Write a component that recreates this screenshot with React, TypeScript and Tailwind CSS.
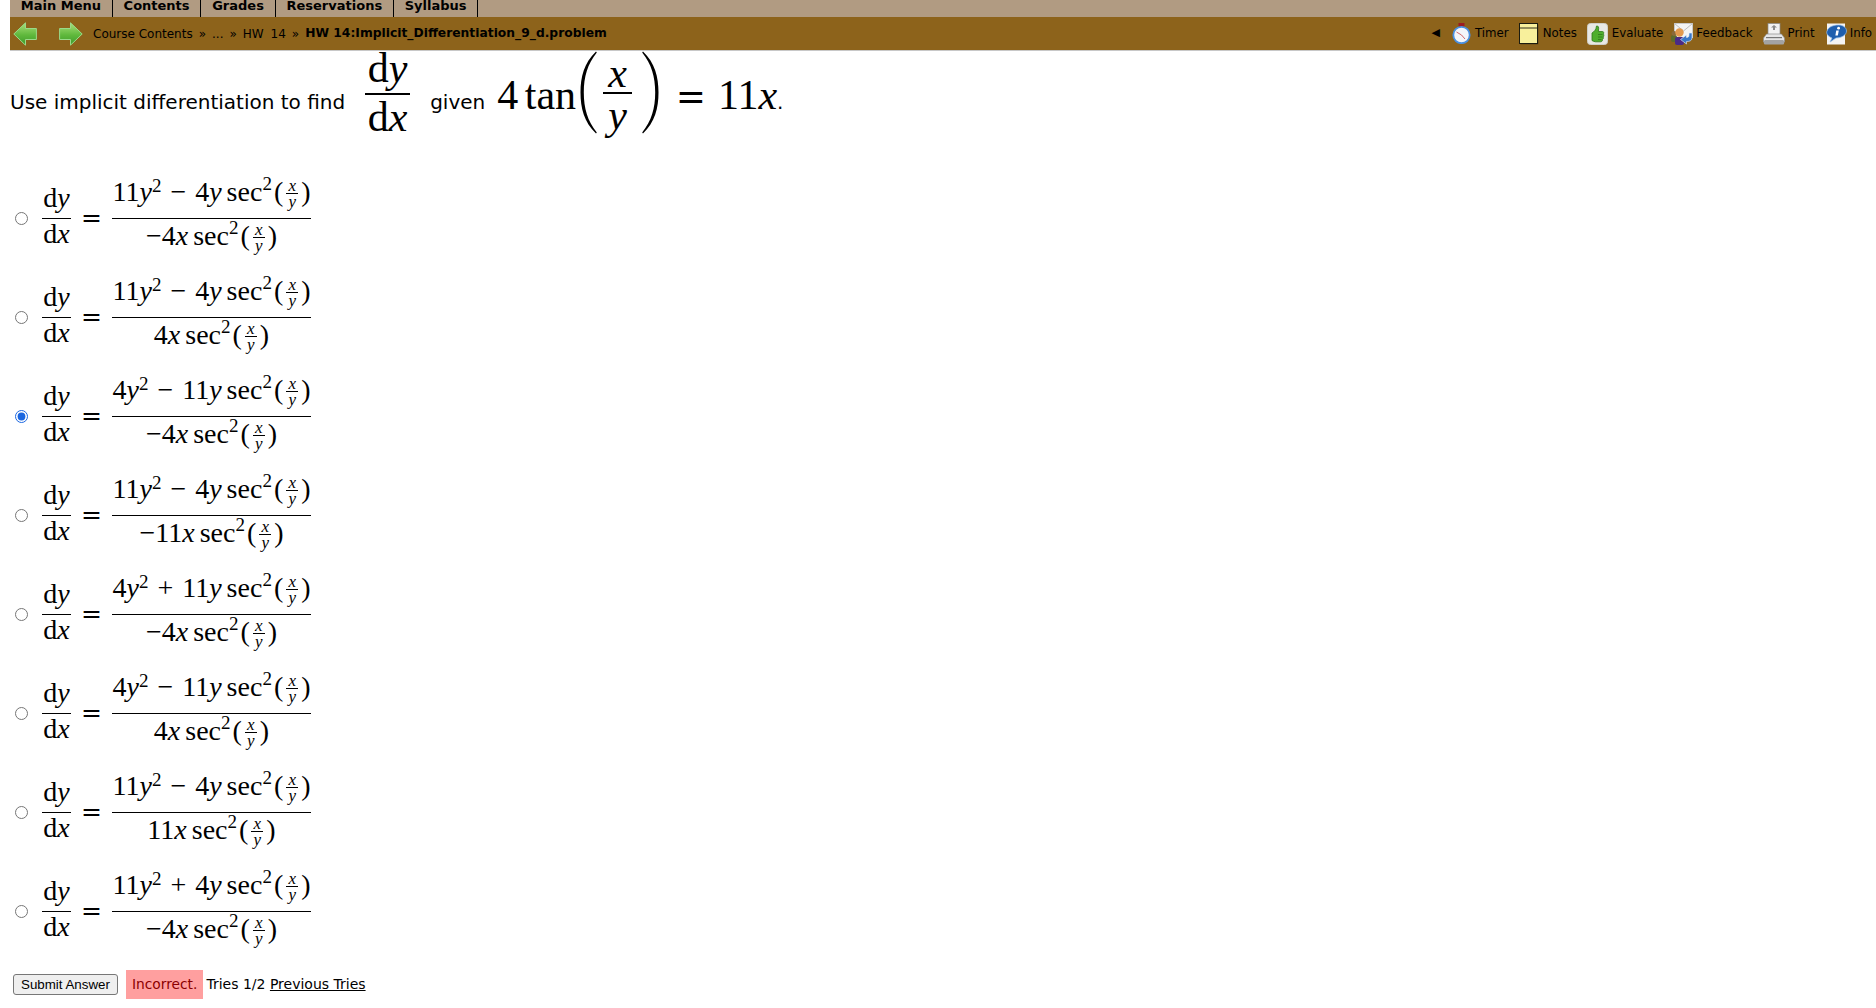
import React from "react";

const serif = "font-['Liberation_Serif','Times_New_Roman',serif]";

function Two() {
  return <span className="relative -top-[9px] text-[19px] leading-none">2</span>;
}

function Sec({ pre }: { pre: React.ReactNode }) {
  return (
    <span className="inline-flex items-center whitespace-pre">
      {pre}
      <span className="ml-[5px]">sec</span>
      <Two />
      <span className="ml-[2px]">(</span>
      <span className="inline-flex flex-col items-center text-[17px] leading-[15px] mx-[3px] mt-[3px]">
        <i>x</i>
        <span className="block w-[12px] h-px bg-black" />
        <i>y</i>
      </span>
      <span>)</span>
    </span>
  );
}

function Row({ num1, op, num2, den, checked }: { num1: React.ReactNode; op: string; num2: React.ReactNode; den: React.ReactNode; checked?: boolean }) {
  return (
    <div className="flex items-center h-[99px]">
      <input type="radio" readOnly checked={!!checked} className="w-[13px] h-[13px] ml-[15px] mr-[14px] accent-[#1a66e0]" />
      <div className={`${serif} flex items-center text-[28px] text-black`}>
        <span className="inline-flex flex-col items-center w-[29px]">
          <span className="leading-[35px] pb-[3px]">d<i>y</i></span>
          <span className="block w-full h-px bg-black" />
          <span className="leading-[35px] -mt-[3px] pb-[6px]">d<i>x</i></span>
        </span>
        <span className="mx-[12px] w-[17px] flex justify-center leading-none font-bold scale-x-[1.2]">=</span>
        <span className="inline-flex flex-col items-center w-[199px]">
          <span className="h-[47px] flex items-end whitespace-pre pb-[5px]">
            {num1}
            <span className="mx-[9px]">{op}</span>
            <Sec pre={num2} />
          </span>
          <span className="block w-full h-px bg-black" />
          <span className="h-[47px] flex items-start"><span className="-mt-[4px]">{den}</span></span>
        </span>
      </div>
    </div>
  );
}

const P = ({ a, v }: { a: string; v: string }) => (
  <span className="whitespace-pre">{a}<i>{v}</i></span>
);
const Sq = ({ a }: { a: string }) => (
  <span className="whitespace-pre">{a}<i>y</i><Two /></span>
);

const rows = [
  { num1: <Sq a="11" />, op: "−", num2: <P a="4" v="y" />, den: <Sec pre={<P a="−4" v="x" />} /> },
  { num1: <Sq a="11" />, op: "−", num2: <P a="4" v="y" />, den: <Sec pre={<P a="4" v="x" />} /> },
  { num1: <Sq a="4" />, op: "−", num2: <P a="11" v="y" />, den: <Sec pre={<P a="−4" v="x" />} />, checked: true },
  { num1: <Sq a="11" />, op: "−", num2: <P a="4" v="y" />, den: <Sec pre={<P a="−11" v="x" />} /> },
  { num1: <Sq a="4" />, op: "+", num2: <P a="11" v="y" />, den: <Sec pre={<P a="−4" v="x" />} /> },
  { num1: <Sq a="4" />, op: "−", num2: <P a="11" v="y" />, den: <Sec pre={<P a="4" v="x" />} /> },
  { num1: <Sq a="11" />, op: "−", num2: <P a="4" v="y" />, den: <Sec pre={<P a="11" v="x" />} /> },
  { num1: <Sq a="11" />, op: "+", num2: <P a="4" v="y" />, den: <Sec pre={<P a="−4" v="x" />} /> },
];

const Arrow = ({ flip, id }: { flip?: boolean; id: string }) => (
  <svg width="24" height="24" viewBox="0 0 24 24" style={flip ? { transform: "scaleX(-1)" } : undefined}>
    <defs>
      <linearGradient id={id} x1="0" y1="0" x2="0" y2="1">
        <stop offset="0" stopColor="#a9e07a" />
        <stop offset="0.55" stopColor="#5fb83c" />
        <stop offset="1" stopColor="#3c9a2a" />
      </linearGradient>
    </defs>
    <path d="M0.8 12 L12.5 0.8 V6.5 H23.4 V17.5 H12.5 V23.2 Z" fill={`url(#${id})`} stroke="#9ad98a" strokeWidth="1" />
  </svg>
);

const Clock = () => (
  <svg width="19" height="21" viewBox="0 0 19 21">
    <rect x="6.5" y="0" width="6" height="3.5" fill="#9c1c22" />
    <circle cx="9.5" cy="12" r="8.2" fill="#f4f6fa" stroke="#4a90e0" strokeWidth="1.8" />
    <path d="M9.5 12 L4.5 9 M9.5 12 L13 16" stroke="#d0656b" strokeWidth="1" fill="none" />
  </svg>
);

const Note = () => (
  <svg width="20" height="22" viewBox="0 0 20 22">
    <rect x="1.5" y="1.5" width="18" height="20" fill="#4a3a1c" opacity="0.55" />
    <rect x="0.5" y="0.5" width="18" height="20" fill="#f8f09c" stroke="#1c1c10" strokeWidth="1" />
    <line x1="1" y1="5" x2="18" y2="5" stroke="#33301a" strokeWidth="1" />
  </svg>
);

const Thumb = () => (
  <svg width="21" height="22" viewBox="0 0 21 22">
    <rect x="0.5" y="0.5" width="20" height="21" rx="3" fill="#e8e8e4" stroke="#cfcfc8" />
    <path d="M9.5 3 C11.5 2.6 12 4.5 11.5 7 L11.5 8.5 H15.5 C16.8 8.5 17 10 16.4 11 C17 12 17 13.2 16.2 14 C16.6 15 16.3 16 15.5 16.5 C15.7 17.8 14.8 18.8 13.5 18.8 H8.5 C7 18.8 6 18 5 17.5 V10 C6.8 8.8 9.2 7 9.5 3 Z" fill="#4fae2e" stroke="#2f7a1c" strokeWidth="0.8" />
    <path d="M11 11.5 H15.5 M11 14 H15.5 M11 16.5 H14.5" stroke="#2f7a1c" strokeWidth="0.8" />
  </svg>
);

const Feedback = () => (
  <svg width="22" height="22" viewBox="0 0 22 22">
    <rect x="3.5" y="0.5" width="18" height="14" fill="#f4f4f4" stroke="#c9c9c9" />
    <path d="M3.5 0.5 L12.5 8 L21.5 0.5" fill="none" stroke="#bdbdbd" />
    <rect x="0" y="12" width="6" height="7" rx="2" fill="#5c6b2c" />
    <circle cx="3" cy="10.5" r="2.4" fill="#8a6a3a" />
    <rect x="4" y="14" width="9" height="8" rx="2" fill="#4a2a86" />
    <circle cx="8.5" cy="9.5" r="4.2" fill="#e39a4e" />
    <path d="M21 10 V15 C21 18 18 18.5 15.5 18.5 V21 L9.5 16.5 L15.5 12 V14.5 C17 14.5 18 14 18 12 V10 Z" fill="#3a78c8" stroke="#e8f0fa" strokeWidth="0.6" />
  </svg>
);

const Printer = () => (
  <svg width="22" height="22" viewBox="0 0 22 22">
    <rect x="5" y="0.5" width="12" height="11" fill="#f2f2f2" stroke="#8a8a8a" strokeWidth="0.7" />
    <path d="M8 4.5 H14 L11 2 Z M10 4.5 H12 V7 H10 Z" fill="#8a8a8a" />
    <path d="M3.5 11 H18.5 L21.5 15 V19 H0.5 V15 Z" fill="#e6e6e6" stroke="#8d8d8d" strokeWidth="0.7" />
    <rect x="0.8" y="17" width="20.4" height="4.5" rx="1.5" fill="#a3a3a3" />
    <rect x="3" y="14" width="16" height="1.2" fill="#777" />
  </svg>
);

const Info = () => (
  <svg width="21" height="22" viewBox="0 0 21 22">
    <rect x="1" y="0.5" width="18" height="21" fill="#f4f4f4" />
    <path d="M4 19 L6 15 C1.5 13 0 10.5 1 8 C2.5 3.5 8 2 12.5 2 C17 2 20.5 4.5 20.5 8 C20.5 12 15.5 15 10 15 Z" fill="#1f5fae" stroke="#9ac0ea" strokeWidth="0.7" />
    <circle cx="12.6" cy="5.2" r="1.4" fill="#fff" />
    <path d="M10.2 7.5 H12.8 L11.8 12.5 H9.4 Z" fill="#fff" />
  </svg>
);

const Tool = ({ icon, label, gap }: { icon: React.ReactNode; label: string; gap: string }) => (
  <span className={`inline-flex items-center text-[11.8px] text-black ${gap}`}>
    {icon}
    {label}
  </span>
);

const Paren = ({ flip }: { flip?: boolean }) => (
  <svg width="20" height="83" viewBox="0 0 20 83" style={flip ? { transform: "scaleX(-1)" } : undefined}>
    <path d="M18 0.5 C6 12 2.5 26 2.5 41.5 C2.5 57 6 71 18 82.5 L18.8 81.5 C9.5 70 5.8 57 5.8 41.5 C5.8 26 9.5 13 18.8 1.5 Z" fill="#000" />
  </svg>
);

export default function App() {
  return (
    <div className="min-h-[1008px] bg-white font-['DejaVu_Sans',sans-serif] text-black overflow-hidden">
      <div className="ml-[10px]">
        <div className="h-[17px] bg-[#b19b82] flex text-[13px] font-bold leading-[11px] overflow-hidden">
          {["Main Menu", "Contents", "Grades", "Reservations", "Syllabus"].map((t) => (
            <span key={t} className="px-[10.8px] border-r border-black h-full whitespace-nowrap">{t}</span>
          ))}
        </div>
        <div className="h-[34px] bg-[#8d631b] flex items-center border-b border-[#c8c8c8]">
          <span className="ml-[3px] flex"><Arrow id="a1" /></span>
          <span className="ml-[22px] flex"><Arrow id="a2" flip /></span>
          <span className="ml-[10px] text-[12px] whitespace-pre flex items-center">
            <span>Course Contents</span>
            <span className="mx-[6px]">»</span>
            <span>...</span>
            <span className="mx-[6px]">»</span>
            <span className="[word-spacing:3px]">HW 14</span>
            <span className="mx-[6px]">»</span>
            <b className="text-[12.3px]">HW 14:Implicit_Differentiation_9_d.problem</b>
          </span>
          <span className="ml-auto flex items-center pr-[4px]">
            <span className="text-[11px] mr-[12px]">◀</span>
            <Tool gap="gap-[4px] mr-[10px]" label="Timer" icon={<Clock />} />
            <Tool gap="gap-[4px] mr-[10px]" label="Notes" icon={<Note />} />
            <Tool gap="gap-[4px] mr-[8px]" label="Evaluate" icon={<Thumb />} />
            <Tool gap="gap-[3px] mr-[10px]" label="Feedback" icon={<Feedback />} />
            <Tool gap="gap-[3px] mr-[11px]" label="Print" icon={<Printer />} />
            <Tool gap="gap-[3px]" label="Info" icon={<Info />} />
          </span>
        </div>
      </div>
      <div className="flex items-center ml-[10px] h-[82px] text-[20px]">
        <span className="mt-[19px]">Use implicit differentiation to find</span>
        <span className={`${serif} inline-flex flex-col items-center w-[45px] ml-[20px] text-[42px]`}>
          <span className="leading-[42px] pb-[4px]">d<i>y</i></span>
          <span className="block w-full h-[2px] bg-black" />
          <span className="leading-[42px] pt-[1px]">d<i>x</i></span>
        </span>
        <span className="ml-[20px] mt-[19px]">given</span>
        <span className={`${serif} ml-[12px] flex items-center text-[42px] whitespace-pre`}>
          <span className="[word-spacing:-4px] mr-[2px] mt-[6px]">4 tan</span>
          <Paren />
          <span className="inline-flex flex-col items-center w-[29px] mx-[5px] mr-[9px]">
            <i className="leading-[38px] pt-[4px]">x</i>
            <span className="block w-full h-[2px] bg-black" />
            <i className="leading-[40px] pt-[1px]">y</i>
          </span>
          <Paren flip />
          <span className="ml-[18px] mr-[15px] font-bold leading-none scale-x-[1.15] mt-[10px]">=</span>
          <span className="mt-[6px]">11<i>x</i></span>
        </span>
        <span className="mt-[19px]">.</span>
      </div>
      <div className="mt-[36px]">
        {rows.map((r, i) => <Row key={i} {...r} />)}
      </div>
      <div className="flex items-center ml-[13px] mt-[9px] text-[14px]">
        <button className="h-[21px] px-[7px] border border-[#777] rounded-[3px] bg-[#efefef] text-[13.33px] leading-none font-['Liberation_Sans',sans-serif]">Submit Answer</button>
        <span className="ml-[8px] h-[29px] px-[6px] flex items-center bg-[#ff9f9f] text-[#8b0000] text-[13.8px]">Incorrect.</span>
        <span className="ml-[3px] whitespace-pre">Tries 1/2 <span className="underline">Previous Tries</span></span>
      </div>
    </div>
  );
}
